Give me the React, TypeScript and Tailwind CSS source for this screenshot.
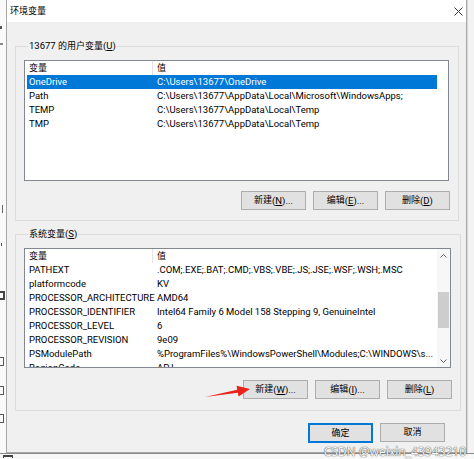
import React from "react";

const userVars: [string, string][] = [
  ["OneDrive", "C:\\Users\\13677\\OneDrive"],
  ["Path", "C:\\Users\\13677\\AppData\\Local\\Microsoft\\WindowsApps;"],
  ["TEMP", "C:\\Users\\13677\\AppData\\Local\\Temp"],
  ["TMP", "C:\\Users\\13677\\AppData\\Local\\Temp"],
];

const sysVars: [string, string][] = [
  ["PATHEXT", ".COM;.EXE;.BAT;.CMD;.VBS;.VBE;.JS;.JSE;.WSF;.WSH;.MSC"],
  ["platformcode", "KV"],
  ["PROCESSOR_ARCHITECTURE", "AMD64"],
  ["PROCESSOR_IDENTIFIER", "Intel64 Family 6 Model 158 Stepping 9, GenuineIntel"],
  ["PROCESSOR_LEVEL", "6"],
  ["PROCESSOR_REVISION", "9e09"],
  ["PSModulePath", "%ProgramFiles%\\WindowsPowerShell\\Modules;C:\\WINDOWS\\s..."],
  ["RegionCode", "APJ"],
];

function Label({ zh, k, dots }: { zh: string; k: string; dots?: boolean }) {
  return (
    <>
      <span className="text-[9px]">{zh}</span>(<span className="underline">{k}</span>){dots ? "..." : ""}
    </>
  );
}

function Btn({ children, primary }: { children: React.ReactNode; primary?: boolean }) {
  return (
    <div
      className={`flex w-[65px] items-center justify-center bg-[#e1e1e1] ${
        primary ? "h-[20px] border-2 border-[#0078d7]" : "h-[19px] border border-[#adadad]"
      }`}
    >
      {children}
    </div>
  );
}

function Chevron({ up }: { up?: boolean }) {
  return (
    <svg width="7" height="4" viewBox="0 0 7 4">
      <polyline
        points={up ? "0.5,3.5 3.5,0.5 6.5,3.5" : "0.5,0.5 3.5,3.5 6.5,0.5"}
        fill="none"
        stroke="#606060"
        strokeWidth="1"
      />
    </svg>
  );
}

function Scrollbar() {
  return (
    <div className="flex w-[13px] shrink-0 flex-col bg-[#f7f7f7]">
      <div className="flex h-[13px] items-center justify-center">
        <Chevron up />
      </div>
      <div className="flex-1 pt-[30px] pl-[1px]">
        <div className="h-[36px] w-[11px] bg-[#cdcdcd]" />
      </div>
      <div className="flex h-[13px] items-center justify-center">
        <Chevron />
      </div>
    </div>
  );
}

function VarList({ rows, selected, scroll, h }: { rows: [string, string][]; selected?: number; scroll?: boolean; h: string }) {
  return (
    <div className={`mt-[8px] flex overflow-hidden border border-[#828790] bg-white ${h}`}>
      <div className="flex min-w-0 flex-1 flex-col overflow-hidden pl-[2px]">
        <div className="flex h-[14px] shrink-0 items-center">
          <div className="w-[125px] pl-[2px] text-[9px]">变量</div>
          <div className="h-full w-px bg-[#e5e5e5]" />
          <div className="pl-[4px] text-[9px]">值</div>
        </div>
        {rows.map(([k, v], i) => (
          <div
            key={k}
            className={`flex h-[14px] w-[410px] shrink-0 items-center overflow-hidden whitespace-nowrap ${
              i === selected ? "bg-[#0078d7] text-white" : ""
            }`}
          >
            <div className="w-[125px] shrink-0 pl-[2px]">{k}</div>
            <div className="pl-[5px]">{v}</div>
          </div>
        ))}
      </div>
      {scroll && <Scrollbar />}
    </div>
  );
}

// bits of the window behind the dialog, showing at its left edge
function Behind() {
  return (
    <div className="flex w-[6px] flex-col bg-[#fafafa]">
      <div className="h-[26px]" />
      <div className="h-[3px] w-[2px] bg-[#555]" />
      <div className="h-[14px]" />
      <div className="h-[2px] w-[3px] bg-[#888]" />
      <div className="h-[160px]" />
      <div className="ml-[2px] h-[8px] w-[1px] bg-[#666]" />
      <div className="h-[30px]" />
      <div className="ml-[1px] h-[3px] w-[1px] bg-[#555]" />
      <div className="h-[45px]" />
      <div className="h-[9px] w-[5px] border-y-2 border-r-2 border-[#444]" />
      <div className="h-[57px]" />
      <div className="h-[9px] w-[4px] border-y border-r border-[#555]" />
      <div className="h-[20px]" />
      <div className="h-[9px] w-[4px] border-y border-r border-[#555]" />
      <div className="h-[19px]" />
      <div className="h-[9px] w-[4px] border-y border-r border-[#555]" />
    </div>
  );
}

export default function App() {
  return (
    <div className="relative flex h-[459px] w-[474px] flex-col overflow-hidden bg-[#f3f3f3] font-['Roboto','Noto_Sans_CJK_SC',sans-serif] text-[9.5px] leading-none text-black">
      <div className="flex h-[453px]">
        <Behind />

        {/* dialog */}
        <div className="flex w-[461px] flex-col border-x border-b border-[#a8a8a8]">
          <div className="flex h-[22px] shrink-0 items-center justify-between bg-white pl-[3px] pr-[3px]">
            <span className="text-[9px]">环境变量</span>
            <svg width="9" height="9" viewBox="0 0 9 9">
              <path d="M0.5 0.5 L8.5 8.5 M8.5 0.5 L0.5 8.5" stroke="#333" strokeWidth="1" />
            </svg>
          </div>

          <div className="flex flex-1 flex-col bg-[#f0f0f0] pl-[8px] pr-[7px] pt-[18px]">
            {/* user variables */}
            <fieldset className="flex flex-col border border-[#dcdcdc] pb-[10px] pl-[8px] pr-[9px]">
              <legend className="ml-[4px] h-[12px] px-[1px] leading-[12px]">
                13677 <Label zh="的用户变量" k="U" />
              </legend>
              <VarList rows={userVars} selected={0} h="h-[121px]" />
              <div className="mr-[-1px] mt-[10px] flex justify-end gap-[7px]">
                <Btn>
                  <Label zh="新建" k="N" dots />
                </Btn>
                <Btn>
                  <Label zh="编辑" k="E" dots />
                </Btn>
                <Btn>
                  <Label zh="删除" k="D" />
                </Btn>
              </div>
            </fieldset>

            {/* system variables */}
            <fieldset className="mt-[7px] flex flex-col border border-[#dcdcdc] pb-[11px] pl-[8px] pr-[9px]">
              <legend className="ml-[4px] h-[12px] px-[1px] leading-[12px]">
                <Label zh="系统变量" k="S" />
              </legend>
              <VarList rows={sysVars} scroll h="h-[120px]" />
              <div className="mr-[-1px] mt-[12px] flex justify-end gap-[7px]">
                <Btn>
                  <Label zh="新建" k="W" dots />
                </Btn>
                <Btn>
                  <Label zh="编辑" k="I" dots />
                </Btn>
                <Btn>
                  <Label zh="删除" k="L" />
                </Btn>
              </div>
            </fieldset>

            <div className="mr-[14px] mt-[12px] flex justify-end gap-[7px]">
              <Btn primary>
                <span className="text-[9px]">确定</span>
              </Btn>
              <Btn>
                <span className="text-[9px]">取消</span>
              </Btn>
            </div>
          </div>
        </div>

        <div className="flex-1 border-l border-[#d8d8d8] bg-[#f3f3f3]" />
      </div>

      <div className="flex flex-1 items-start border-t border-[#8a8a8a] bg-[#f7f7f7] pl-[3px] pt-[1px]">
        <div className="h-[3px] w-[10px] border-t-2 border-x border-[#444]" />
      </div>

      {/* red annotation arrow */}
      <svg className="absolute left-[200px] top-[380px]" width="55" height="22" viewBox="0 0 55 22">
        <polygon points="5,17 37.2,9.7 36.6,5.8 50,9 38.6,16.5 37.8,12.7" fill="#e8231b" />
      </svg>

      {/* watermark */}
      <div className="absolute bottom-[1px] right-[8px] font-['Noto_Sans',sans-serif] text-[12px] text-[#f6f6f6] [text-shadow:0_0_1px_#555,0_0_1px_#555]">
        CSDN @weixin_43943210
      </div>
    </div>
  );
}
